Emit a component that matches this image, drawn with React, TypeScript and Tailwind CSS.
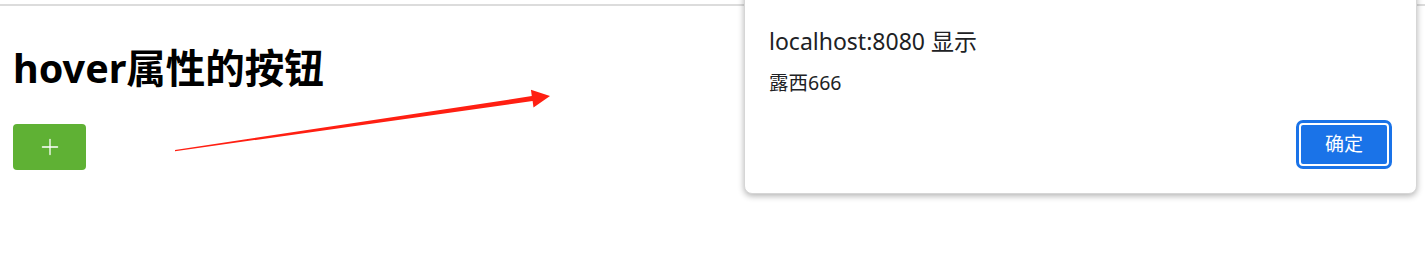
import { Plus } from "lucide-react";

const cjk = { fontFamily: '"Noto Sans", "Noto Sans CJK SC", sans-serif' };

function AlertDialog() {
  return (
    <div
      className="absolute left-[744px] top-[-12px] w-[673px] h-[206px] bg-white rounded-lg border border-[#d6d6d6] shadow-[0_2px_6px_rgba(0,0,0,0.3)] flex flex-col pl-6 pr-6 pt-[37px] pb-6"
      style={cjk}
    >
      <div className="text-[23px] leading-[30px] text-[#202124]">localhost:8080 显示</div>
      <div className="mt-[14px] text-[19.5px] leading-[26px] text-[#202124]">露西666</div>
      <div className="mt-auto flex justify-end">
        <button className="w-[96px] h-[49px] rounded-[7px] bg-[#1a73e8] border-[3px] border-[#1a73e8] text-white text-[19px] flex items-center justify-center">
          <span className="w-full h-full rounded-[4px] border-2 border-white flex items-center justify-center">
            确定
          </span>
        </button>
      </div>
    </div>
  );
}

export default function App() {
  return (
    <div className="relative w-[1425px] h-[258px] bg-white overflow-hidden" style={cjk}>
      {/* top divider */}
      <div className="mt-1 h-[2px] bg-[#dcdcdc]" />

      <div className="px-[13px]">
        <h1 className="mt-[34px] text-[39.5px] leading-[56px] font-bold text-black">hover属性的按钮</h1>
        <button className="mt-[28px] w-[73px] h-[46px] rounded-[4px] bg-[#5fb134] flex items-center justify-center text-white">
          <Plus className="w-[26px] h-[26px]" strokeWidth={1.2} />
        </button>
      </div>

      {/* annotation arrow */}
      <svg className="absolute left-0 top-0 pointer-events-none" width="1425" height="258">
        <polygon
          points="175,150 531.8,96.1 530.9,89.7 550,96 533.5,107.5 532.6,101.1 175,151.2"
          fill="#ff1f12"
        />
      </svg>

      <AlertDialog />
    </div>
  );
}
